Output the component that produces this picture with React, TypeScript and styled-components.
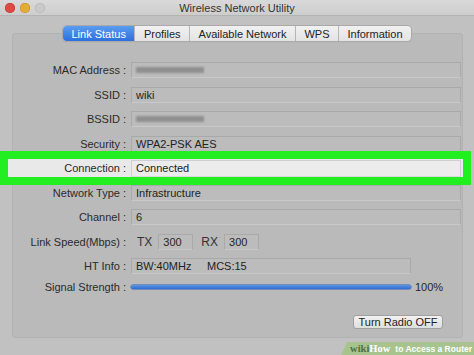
import { styled, createGlobalStyle } from "styled-components";

const GlobalStyle = createGlobalStyle`
  html, body {
    margin: 0;
    padding: 0;
    background: #c1c1c1;
  }
  body {
    font-family: "Liberation Sans", Arial, sans-serif;
    font-size: 11px;
    color: #262626;
  }
`;

const Window = styled.div`
  position: relative;
  width: 474px;
  height: 355px;
  overflow: hidden;
  display: flex;
  flex-direction: column;
  background: #c1c1c1;
`;

const TitleBar = styled.div`
  height: 16px;
  display: grid;
  grid-template-columns: 1fr auto 1fr;
  align-items: center;
  background: linear-gradient(#d9d9d9, #cdcdcd);
  border-bottom: 1px solid #b3b3b3;
  box-sizing: border-box;
`;

const Lights = styled.div`
  display: flex;
  gap: 5px;
  padding-left: 5px;
`;

const Light = styled.span<{ $color: string; $edge: string }>`
  width: 10px;
  height: 10px;
  border-radius: 50%;
  background: ${(p) => p.$color};
  box-shadow: inset 0 0 0 0.5px ${(p) => p.$edge};
`;

const Title = styled.div`
  font-size: 11px;
  color: #333;
  padding-top: 1px;
`;

const Tabs = styled.div`
  position: relative;
  z-index: 1;
  align-self: center;
  display: flex;
  margin-top: 10px;
  height: 15px;
  border-radius: 4px;
  box-shadow: 0 0 0 1px #a9a9a9, 0 1px 1px rgba(0, 0, 0, 0.15);
  background: linear-gradient(#f1f1f1, #e3e3e3);
  overflow: hidden;
`;

const Tab = styled.div<{ $active?: boolean }>`
  display: flex;
  align-items: center;
  padding: 0 8.5px;
  font-size: 11px;
  color: ${(p) => (p.$active ? "#fff" : "#222")};
  background: ${(p) => (p.$active ? "linear-gradient(#5a9cf0, #2c6fdc)" : "transparent")};
  border-left: 1px solid #b5b5b5;
  &:first-child {
    border-left: none;
  }
`;

const Panel = styled.div`
  margin: -8px 11px 0 12px;
  height: 305px;
  box-sizing: border-box;
  padding-top: 24px;
  background: #bababa;
  border: 1px solid #b2b2b2;
  border-radius: 3px;
  display: flex;
  flex-direction: column;
`;

const Row = styled.div<{ $highlight?: boolean }>`
  display: grid;
  grid-template-columns: 113px 1fr;
  column-gap: 5px;
  align-items: center;
  height: ${(p) => (p.$highlight ? "18px" : "24.5px")};
  ${(p) =>
    p.$highlight &&
    `
    position: relative;
    z-index: 2;
    margin: 3.25px -1px 3.25px -5px;
    padding-left: 5px;
    padding-right: 1px;
    background: #e9e9e9;
    box-shadow: 0 0 0 8px #22ee22;
  `}
`;

const Label = styled.div`
  text-align: right;
  white-space: nowrap;
  color: #2a2a2a;
`;

const Field = styled.div<{ $light?: boolean }>`
  height: ${(p) => (p.$light ? "17px" : "16px")};
  box-sizing: border-box;
  margin-right: 1px;
  display: flex;
  align-items: center;
  padding-left: 4px;
  background: ${(p) => (p.$light ? "#ececec" : "#bcbcbc")};
  border: 1px solid ${(p) => (p.$light ? "#cfcfcf" : "#a9a9a9")};
  border-bottom-color: ${(p) => (p.$light ? "#dadada" : "#c9c9c9")};
  color: #222;
  white-space: nowrap;
`;

const Blurred = styled.div`
  width: 68px;
  height: 6px;
  background: #8f8f8f;
  filter: blur(1.2px);
`;

const SpeedLine = styled.div`
  display: flex;
  align-items: center;
  padding-left: 6px;
`;

const SpeedTag = styled.span`
  font-size: 12px;
  color: #333;
  margin-right: 6px;
`;

const SpeedBox = styled.div`
  width: 35px;
  height: 16px;
  box-sizing: border-box;
  padding-left: 4px;
  display: flex;
  align-items: center;
  background: #bcbcbc;
  border: 1px solid #a9a9a9;
  border-bottom-color: #c9c9c9;
  margin-right: 8px;
`;

const HtField = styled(Field)`
  width: 280px;
`;

const HtPart = styled.span<{ $w: number }>`
  width: ${(p) => p.$w}px;
`;

const SignalRow = styled(Row)`
  height: 16px;
`;

const SignalLine = styled.div`
  display: flex;
  align-items: center;
`;

const Bar = styled.div`
  width: 280px;
  height: 4px;
  border-radius: 3px;
  background: linear-gradient(#5b95e3, #2f6bd1);
  box-shadow: 0 0 0 0.5px #2a5fb8;
`;

const Percent = styled.span`
  margin-left: 4px;
`;

const ButtonRow = styled.div`
  display: flex;
  justify-content: flex-end;
  margin-top: 20.5px;
  padding-right: 19px;
`;

const Button = styled.div`
  width: 90px;
  height: 14px;
  box-sizing: border-box;
  display: flex;
  align-items: center;
  justify-content: center;
  font-size: 11px;
  color: #222;
  background: linear-gradient(#f2f2f2, #dedede);
  border: 1px solid #a0a0a0;
  border-radius: 3px;
`;

const Watermark = styled.div`
  position: absolute;
  right: 0;
  bottom: 0;
  height: 13px;
  padding: 0 2px 0 9px;
  display: flex;
  align-items: center;
  background: #a7c48f;
  clip-path: polygon(6px 0, 100% 0, 100% 100%, 0 100%);
  white-space: nowrap;
`;

const WikiWord = styled.span<{ $dark?: boolean }>`
  font-family: "Liberation Serif", "Times New Roman", serif;
  font-weight: bold;
  font-size: 10.5px;
  color: ${(p) => (p.$dark ? "#52703a" : "#ffffff")};
`;

const WikiRest = styled.span`
  color: #fff;
  font-size: 8.5px;
  font-weight: bold;
  margin-left: 5px;
`;

const tabs = ["Link Status", "Profiles", "Available Network", "WPS", "Information"];

export default function App() {
  return (
    <>
      <GlobalStyle />
      <Window>
        <TitleBar>
          <Lights>
            <Light $color="#de4a43" $edge="#b83530" />
            <Light $color="#e3ac34" $edge="#c08d22" />
            <Light $color="#c9c9c9" $edge="#b0b0b0" />
          </Lights>
          <Title>Wireless Network Utility</Title>
          <div />
        </TitleBar>

        <Tabs>
          {tabs.map((t, i) => (
            <Tab key={t} $active={i === 0}>
              {t}
            </Tab>
          ))}
        </Tabs>

        <Panel>
          <Row>
            <Label>MAC Address :</Label>
            <Field>
              <Blurred />
            </Field>
          </Row>
          <Row>
            <Label>SSID :</Label>
            <Field>wiki</Field>
          </Row>
          <Row>
            <Label>BSSID :</Label>
            <Field>
              <Blurred />
            </Field>
          </Row>
          <Row>
            <Label>Security :</Label>
            <Field>WPA2-PSK AES</Field>
          </Row>
          <Row $highlight>
            <Label>Connection :</Label>
            <Field $light>Connected</Field>
          </Row>
          <Row>
            <Label>Network Type :</Label>
            <Field>Infrastructure</Field>
          </Row>
          <Row>
            <Label>Channel :</Label>
            <Field>6</Field>
          </Row>
          <Row>
            <Label>Link Speed(Mbps) :</Label>
            <SpeedLine>
              <SpeedTag>TX</SpeedTag>
              <SpeedBox>300</SpeedBox>
              <SpeedTag>RX</SpeedTag>
              <SpeedBox>300</SpeedBox>
            </SpeedLine>
          </Row>
          <Row>
            <Label>HT Info :</Label>
            <HtField>
              <HtPart $w={71}>BW:40MHz</HtPart>
              <HtPart $w={60}>MCS:15</HtPart>
            </HtField>
          </Row>
          <SignalRow>
            <Label>Signal Strength :</Label>
            <SignalLine>
              <Bar />
              <Percent>100%</Percent>
            </SignalLine>
          </SignalRow>
          <ButtonRow>
            <Button>Turn Radio OFF</Button>
          </ButtonRow>
        </Panel>

        <Watermark>
          <WikiWord $dark>wiki</WikiWord>
          <WikiWord>How</WikiWord>
          <WikiRest>to Access a Router</WikiRest>
        </Watermark>
      </Window>
    </>
  );
}
